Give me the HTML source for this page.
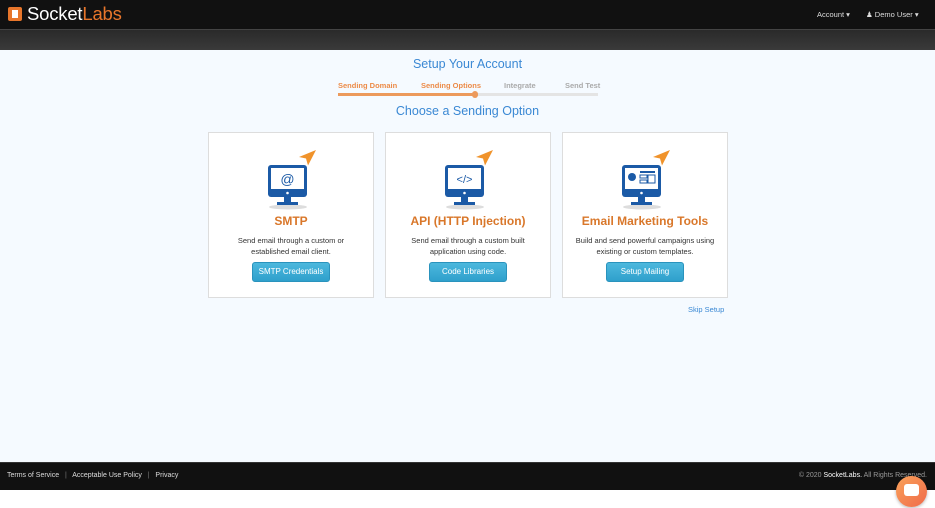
<!DOCTYPE html>
<html><head><meta charset="utf-8"><style>
*{margin:0;padding:0;box-sizing:border-box}
body{width:935px;height:508px;overflow:hidden;background:#fff;font-family:"Liberation Sans",sans-serif;position:relative}
.hdr{position:absolute;left:0;top:0;width:935px;height:29px;background:#111}
.sub{position:absolute;left:0;top:29px;width:935px;height:21px;background:linear-gradient(#2a2a2a,#3a3a3a);border-top:1px solid #444}
.main{position:absolute;left:0;top:50px;width:935px;height:412px;background:#f5faff}
.ftr{position:absolute;left:0;top:462px;width:935px;height:28px;background:#111;border-top:1px solid #333}
.abs{position:absolute;white-space:nowrap}
.card{position:absolute;top:132px;width:166px;height:166px;background:#fff;border:1px solid #ddd;text-align:center}
.card h3{position:absolute;left:0;right:0;top:81px;font-size:12px;color:#d9772a;font-weight:bold}
.card p{position:absolute;left:0;right:0;top:102px;font-size:7.5px;line-height:11px;color:#333}
.btn{position:absolute;left:43px;top:129px;width:78px;height:20px;background:linear-gradient(#4cb8dd,#2fa0cc);border:1px solid #2a93bd;border-radius:3px;color:#fff;font-size:8px;line-height:18px}
.card svg{position:absolute;left:52px;top:13px}
</style></head><body>
<div class="hdr"></div>
<div class="abs" style="left:8px;top:7px;width:14px;height:14px;background:#e8762b;border-radius:2px"></div>
<div class="abs" style="left:12px;top:10px;width:6px;height:8px;background:#fff"></div>
<div class="abs" style="left:27px;top:3px;font-size:18.5px;color:#fff;letter-spacing:-0.2px">Socket<span style="color:#e8762b">Labs</span></div>
<div class="abs" style="left:817px;top:10px;font-size:7.5px;color:#ddd">Account ▾</div>
<div class="abs" style="left:866px;top:10px;font-size:7.5px;color:#ddd">&#9823; Demo User ▾</div>
<div class="sub"></div>
<div class="main"></div>
<div class="abs" style="left:0;width:935px;top:57px;text-align:center;font-size:12.5px;color:#3a88d4">Setup Your Account</div>
<div class="abs" style="left:338px;top:81px;font-size:7.5px;color:#ec8b48;font-weight:bold">Sending Domain</div>
<div class="abs" style="left:421px;top:81px;font-size:7.5px;color:#ec8b48;font-weight:bold">Sending Options</div>
<div class="abs" style="left:504px;top:81px;font-size:7.5px;color:#aaa;font-weight:bold">Integrate</div>
<div class="abs" style="left:565px;top:81px;font-size:7.5px;color:#aaa;font-weight:bold">Send Test</div>
<div class="abs" style="left:338px;top:93px;width:260px;height:3px;background:#e4e4e4"></div>
<div class="abs" style="left:338px;top:93px;width:137px;height:3px;background:#ec9a5c"></div>
<div class="abs" style="left:472px;top:91px;width:6px;height:7px;border-radius:3px;background:#ec9a5c"></div>
<div class="abs" style="left:0;width:935px;top:104px;text-align:center;font-size:12.5px;color:#3a88d4">Choose a Sending Option</div>

<div class="card" style="left:208px">
<svg width="60" height="65" viewBox="0 0 60 65"><ellipse cx="27" cy="61" rx="19" ry="2.5" fill="#ddd"/><rect x="7" y="19" width="39" height="32" rx="3" fill="#1b5aa6"/><rect x="10" y="22" width="33" height="21" fill="#fff"/><circle cx="26.5" cy="47" r="1.3" fill="#fff"/><path d="M23 51h7v5h7v3H16v-3h7z" fill="#1b5aa6"/><text x="26.5" y="38" font-size="14" fill="#1b5aa6" text-anchor="middle" font-family="Liberation Sans">@</text><path d="M55 4L38 11l7 1.5 2 7z" fill="#f0932b"/></svg>
<h3>SMTP</h3><p>Send email through a custom or<br>established email client.</p><div class="btn">SMTP Credentials</div></div>

<div class="card" style="left:385px">
<svg width="60" height="65" viewBox="0 0 60 65"><ellipse cx="27" cy="61" rx="19" ry="2.5" fill="#ddd"/><rect x="7" y="19" width="39" height="32" rx="3" fill="#1b5aa6"/><rect x="10" y="22" width="33" height="21" fill="#fff"/><circle cx="26.5" cy="47" r="1.3" fill="#fff"/><path d="M23 51h7v5h7v3H16v-3h7z" fill="#1b5aa6"/><text x="26.5" y="37" font-size="11" fill="#1b5aa6" text-anchor="middle" font-family="Liberation Sans">&lt;/&gt;</text><path d="M55 4L38 11l7 1.5 2 7z" fill="#f0932b"/></svg>
<h3>API (HTTP Injection)</h3><p>Send email through a custom built<br>application using code.</p><div class="btn">Code Libraries</div></div>

<div class="card" style="left:562px">
<svg width="60" height="65" viewBox="0 0 60 65"><ellipse cx="27" cy="61" rx="19" ry="2.5" fill="#ddd"/><rect x="7" y="19" width="39" height="32" rx="3" fill="#1b5aa6"/><rect x="10" y="22" width="33" height="21" fill="#fff"/><circle cx="26.5" cy="47" r="1.3" fill="#fff"/><path d="M23 51h7v5h7v3H16v-3h7z" fill="#1b5aa6"/><circle cx="17" cy="31" r="4" fill="#1b5aa6"/><rect x="25" y="25" width="15" height="2" fill="#1b5aa6"/><rect x="25" y="29" width="7" height="3" fill="none" stroke="#1b5aa6" stroke-width="1"/><rect x="25" y="34" width="7" height="3" fill="none" stroke="#1b5aa6" stroke-width="1"/><rect x="33" y="29" width="7" height="8" fill="none" stroke="#1b5aa6" stroke-width="1"/><path d="M55 4L38 11l7 1.5 2 7z" fill="#f0932b"/></svg>
<h3>Email Marketing Tools</h3><p>Build and send powerful campaigns using<br>existing or custom templates.</p><div class="btn">Setup Mailing</div></div>

<div class="abs" style="left:688px;top:305px;font-size:7.5px;color:#3a88d4">Skip Setup</div>

<div class="ftr"></div>
<div class="abs" style="left:7px;top:472px;font-size:7px;color:#ddd">Terms of Service &nbsp;&nbsp;<span style="color:#777">|</span>&nbsp;&nbsp; Acceptable Use Policy &nbsp;&nbsp;<span style="color:#777">|</span>&nbsp;&nbsp; Privacy</div>
<div class="abs" style="right:8px;top:472px;font-size:7px;color:#999">© 2020 <span style="color:#fff">SocketLabs.</span> All Rights Reserved.</div>
<div class="abs" style="left:896px;top:476px;width:31px;height:31px;border-radius:50%;background:linear-gradient(135deg,#f9a25a,#f06a4a);box-shadow:0 1px 3px rgba(0,0,0,.3)"></div>
<div class="abs" style="left:904px;top:484px;width:15px;height:12px;background:#fff;border-radius:3px"></div>
</body></html>
